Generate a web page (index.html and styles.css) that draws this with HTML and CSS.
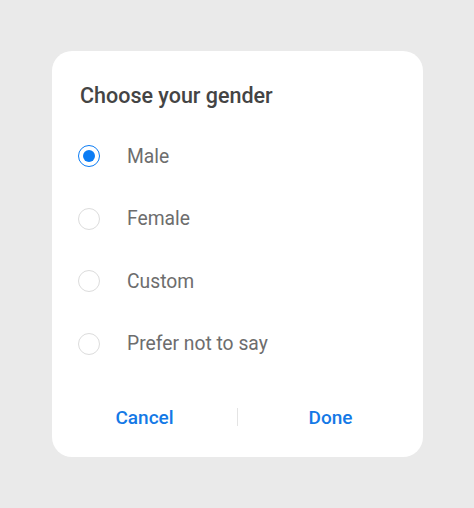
FILE: index.html
```html
<!DOCTYPE html>
<html lang="en">
<head>
<meta charset="utf-8">
<title>Choose your gender</title>
<link rel="stylesheet" href="styles.css">
</head>
<body>
<div class="dialog">
  <h1 class="title">Choose your gender</h1>
  <ul class="options">
    <li class="option"><span class="radio checked"></span><span class="label">Male</span></li>
    <li class="option"><span class="radio"></span><span class="label">Female</span></li>
    <li class="option"><span class="radio"></span><span class="label">Custom</span></li>
    <li class="option"><span class="radio"></span><span class="label">Prefer not to say</span></li>
  </ul>
  <div class="actions">
    <button class="action">Cancel</button>
    <span class="divider"></span>
    <button class="action">Done</button>
  </div>
</div>
</body>
</html>
```

FILE: styles.css
```css
* { box-sizing: border-box; }
html, body { margin: 0; padding: 0; }
body {
  background: #eaeaea;
  width: 474px;
  height: 508px;
  font-family: Roboto, "Noto Sans", sans-serif;
  padding-top: 51px;
}
.dialog {
  margin-left: 52px;
  width: 371px;
  height: 406px;
  background: #ffffff;
  border-radius: 20px;
  padding-top: 33px;
  display: flex;
  flex-direction: column;
}
.title {
  margin: 0 0 17px 28px;
  font-size: 21.5px;
  line-height: 24px;
  font-weight: 500;
  color: #444444;
}
.options {
  list-style: none;
  margin: 0;
  padding: 0 0 0 26px;
}
.option {
  height: 62.5px;
  display: flex;
  align-items: center;
}
.radio {
  width: 22px;
  height: 22px;
  border-radius: 50%;
  border: 1.5px solid #dcdcdc;
  display: flex;
  align-items: center;
  justify-content: center;
  flex: none;
}
.radio.checked {
  border-color: #0b7cf4;
}
.radio.checked::after {
  content: "";
  width: 12px;
  height: 12px;
  border-radius: 50%;
  background: #0b7cf4;
}
.label {
  margin-left: 27px;
  font-size: 19.3px;
  color: #6d6d6d;
}
.actions {
  margin-top: 17px;
  height: 50px;
  display: flex;
  align-items: center;
}
.action {
  flex: 1;
  border: 0;
  background: none;
  padding: 0;
  font-family: Roboto, "Noto Sans", sans-serif;
  font-size: 19px;
  font-weight: 500;
  color: #1479e6;
  height: 50px;
}
.divider {
  width: 1px;
  height: 18px;
  background: #e4e4e4;
  flex: none;
}
```
